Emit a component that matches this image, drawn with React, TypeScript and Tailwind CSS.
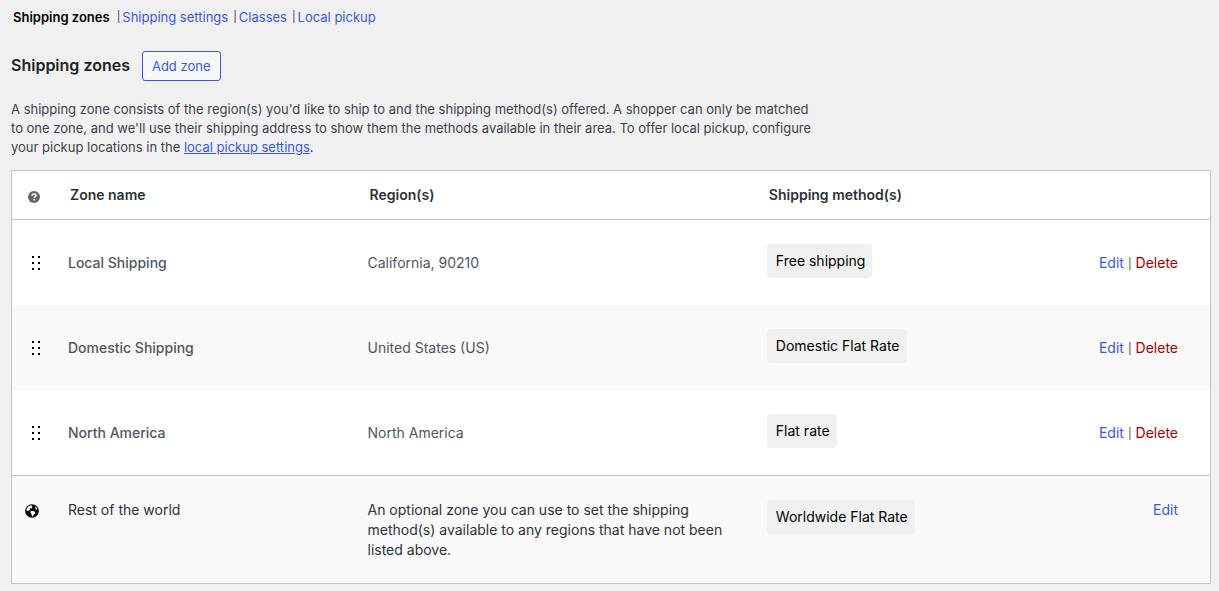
interface ShippingZone {
  name: string;
  region: string;
  method: string;
}

const zones: ShippingZone[] = [
  {
    name: "Local Shipping",
    region: "California, 90210",
    method: "Free shipping",
  },
  {
    name: "Domestic Shipping",
    region: "United States (US)",
    method: "Domestic Flat Rate",
  },
  { name: "North America", region: "North America", method: "Flat rate" },
];

const sections = ["Shipping settings", "Classes", "Local pickup"];

function HelpIcon() {
  return (
    <svg viewBox="0 0 12 12" className="h-3 w-3" aria-hidden="true">
      <circle cx="6" cy="6" r="6" fill="#666" />
      <path
        d="M4 4.7C4 3.5 4.9 2.9 6 2.9s2 .6 2 1.6C8 5.7 6.2 5.7 6.2 7.2"
        fill="none"
        stroke="#fff"
        strokeWidth="1.5"
      />
      <rect x="5.4" y="8" width="1.6" height="1.5" fill="#fff" />
    </svg>
  );
}

function DragHandleIcon() {
  return (
    <svg
      viewBox="0 0 8 14"
      className="h-3.5 w-2"
      shapeRendering="crispEdges"
      aria-hidden="true"
    >
      <path d="M0 0h2v2H0zM6 0h2v2H6zM0 6h2v2H0zM6 6h2v2H6zM0 12h2v2H0zM6 12h2v2H6z" />
    </svg>
  );
}

function GlobeIcon() {
  return (
    <svg viewBox="0 0 14 14" className="h-3.5 w-3.5" aria-hidden="true">
      <circle cx="7" cy="7" r="6.8" />
      <g fill="#f9f9f9">
        <path d="M1.6 4.9C2.3 3.2 3.5 2 5.3 1.4l1.9.1-.5 1.1.9.6-.8 1.2-1.3-.5-.9 1 .6.8-1.4.6-.6 1-.9-.9-.9-.1z" />
        <path d="M5.4 7.6l1.3-.8 1.8.1 1.7 1.2-.2 1.7-1.2.8-.6 1.5-1 .3-.7-1.6-.1-1.3-1-.9z" />
        <path d="M9.6 2.1c1.1.5 2 1.3 2.6 2.5l-.3 1.1-1-.2-.6-1.1.1-1z" />
      </g>
    </svg>
  );
}

function MethodTag({ children }: { children: string }) {
  return (
    <span className="inline-block rounded bg-[#f0f0f0] py-[7px] pr-[7px] pl-[9px] leading-5 text-black">
      {children}
    </span>
  );
}

export default function App() {
  return (
    <div className="min-h-screen bg-[#f0f0f1] pt-[7px] pr-2 pb-[7px] pl-[11px] font-['Inter','Liberation_Sans',sans-serif] text-[13px] text-[#3c434a]">
      <nav className="flex pl-[2px] leading-5">
        <a href="#zones" className="mr-[7px] font-semibold text-black">
          Shipping zones
        </a>
        {sections.map((section) => (
          <span key={section} className="mr-[5px] flex gap-[2px]">
            <span className="text-[11px]">|</span>
            <a href="#section" className="text-[#3858e9]">
              {section}
            </a>
          </span>
        ))}
      </nav>

      <div className="mt-6 flex items-center gap-3">
        <h2 className="pb-[2px] text-base leading-6 font-semibold text-[#1d2327]">
          Shipping zones
        </h2>
        <button
          type="button"
          className="h-[30px] rounded-[3px] border border-[#3858e9] bg-[#f6f7f7] px-[9px] pt-px text-[#3858e9]"
        >
          Add zone
        </button>
      </div>

      <p className="mt-[19px] mb-[13px] max-w-[812px] leading-[19px]">
        A shipping zone consists of the region(s) you'd like to ship to and the
        shipping method(s) offered. A shopper can only be matched to one zone,
        and we'll use their shipping address to show them the methods available
        in their area. To offer local pickup, configure your pickup locations in
        the{" "}
        <a href="#pickup" className="text-[#3858e9] underline">
          local pickup settings
        </a>
        .
      </p>

      <div className="border border-[#c3c4c7] bg-white">
        <table className="w-full table-fixed border-separate border-spacing-0 text-left text-sm leading-5">
          <colgroup>
            <col className="w-[47px]" />
            <col className="w-1/4" />
            <col className="w-1/3" />
            <col />
            <col className="w-[140px]" />
          </colgroup>
          <thead className="text-[#2c3338]">
            <tr className="h-[49px] *:border-b *:border-[#c3c4c7]">
              <th className="pt-1 pl-4">
                <HelpIcon />
              </th>
              <th className="pl-[11px] font-semibold">Zone name</th>
              <th className="pl-[11px] font-semibold">Region(s)</th>
              <th className="pl-[11px] font-semibold">Shipping method(s)</th>
              <td />
            </tr>
          </thead>
          <tbody>
            {zones.map((zone) => (
              <tr key={zone.name} className="h-[85px] even:bg-[#f9f9f9]">
                <td className="pl-5">
                  <DragHandleIcon />
                </td>
                <td className="pl-[9px] font-medium text-[#50575e]">
                  {zone.name}
                </td>
                <td className="pl-[9px] text-[#50575e]">{zone.region}</td>
                <td className="pb-1 pl-[9px]">
                  <MethodTag>{zone.method}</MethodTag>
                </td>
                <td className="pt-[2px] pr-8 text-right whitespace-nowrap">
                  <a href="#edit" className="text-[#3858e9]">
                    Edit
                  </a>
                  <span className="px-1 text-[11px]">|</span>
                  <a href="#delete" className="text-[#a00]">
                    Delete
                  </a>
                </td>
              </tr>
            ))}
          </tbody>
          <tfoot className="text-[#2c3338]">
            <tr className="h-[108px] bg-[#f9f9f9] align-top *:border-t *:border-[#c3c4c7]">
              <td className="pt-7 pl-[13px]">
                <GlobeIcon />
              </td>
              <td className="pt-6 pl-[9px]">Rest of the world</td>
              <td className="pt-6 pr-6 pl-[9px]">
                An optional zone you can use to set the shipping method(s)
                available to any regions that have not been listed above.
              </td>
              <td className="pt-6 pl-[9px]">
                <MethodTag>Worldwide Flat Rate</MethodTag>
              </td>
              <td className="pt-6 pr-8 text-right">
                <a href="#edit" className="text-[#3858e9]">
                  Edit
                </a>
              </td>
            </tr>
          </tfoot>
        </table>
      </div>
    </div>
  );
}
